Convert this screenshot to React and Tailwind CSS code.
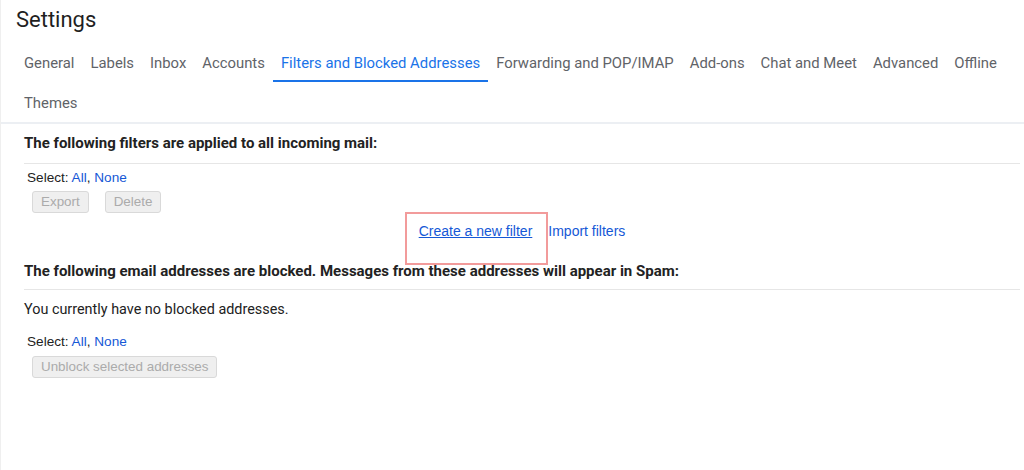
import React from "react";

const tabs = [
  "General",
  "Labels",
  "Inbox",
  "Accounts",
  "Filters and Blocked Addresses",
  "Forwarding and POP/IMAP",
  "Add-ons",
  "Chat and Meet",
  "Advanced",
  "Offline",
  "Themes",
];

function SelectRow() {
  return (
    <div className="pl-[3px] text-[13.6px] leading-4 text-[#222] font-['Liberation_Sans',Arial,sans-serif]">
      Select: <span className="text-[#1558d6]">All</span>,{" "}
      <span className="text-[#1558d6]">None</span>
    </div>
  );
}

function DisabledButton({ children }) {
  return (
    <div className="h-[22px] px-2 flex items-center rounded-[3px] border border-[#d9d9d9] bg-[#efefef] text-[13.4px] text-[#ababab] font-['Liberation_Sans',Arial,sans-serif]">
      {children}
    </div>
  );
}

export default function App() {
  return (
    <div className="relative w-[1024px] h-[470px] overflow-hidden bg-white border-l border-[#efefef] font-['Roboto',sans-serif] text-[#222]">
      <div className="h-[42px] pl-[15px] pt-[6px] text-[22px] leading-7 text-[#1f1f1f]">
        Settings
      </div>
      <div className="flex flex-wrap pl-[15px] pr-1 border-b-2 border-[#eceff3]">
        {tabs.map((t) => {
          const active = t === "Filters and Blocked Addresses";
          return (
            <div
              key={t}
              className={
                active
                  ? "h-10 px-2 pt-[3px] flex items-center text-[14.85px] text-[#1a73e8] shadow-[inset_0_-2px_0_#1a73e8]"
                  : "h-10 px-2 pt-[3px] flex items-center text-[14.85px] text-[#5f6368]"
              }
            >
              {t}
            </div>
          );
        })}
      </div>

      <div className="pl-[23px] pr-1">
        <div className="h-10 pt-[9px] border-b border-[#e6e6e6] text-[15px] leading-5 font-bold text-[#222]">
          The following filters are applied to all incoming mail:
        </div>
        <div className="mt-[6px]">
          <SelectRow />
        </div>
        <div className="mt-[5px] ml-2 flex gap-4">
          <DisabledButton>Export</DisabledButton>
          <DisabledButton>Delete</DisabledButton>
        </div>
        <div className="mt-[10px] flex justify-center gap-4 text-[14px] leading-4 font-['Liberation_Sans',Arial,sans-serif]">
          <span className="text-[#1558d6] underline">Create a new filter</span>
          <span className="text-[#1558d6]">Import filters</span>
        </div>
        <div className="mt-[11px] h-10 pt-[11px] border-b border-[#e6e6e6] text-[15px] leading-5 font-bold text-[#222]">
          The following email addresses are blocked. Messages from these
          addresses will appear in Spam:
        </div>
        <div className="mt-[10px] text-[14.4px] leading-5 text-[#222]">
          You currently have no blocked addresses.
        </div>
        <div className="mt-[14px]">
          <SelectRow />
        </div>
        <div className="mt-[6px] ml-2 flex">
          <DisabledButton>Unblock selected addresses</DisabledButton>
        </div>
      </div>

      <div className="absolute left-[404px] top-[212px] w-[143px] h-[53px] border-2 border-[#f29b9b]" />
    </div>
  );
}
